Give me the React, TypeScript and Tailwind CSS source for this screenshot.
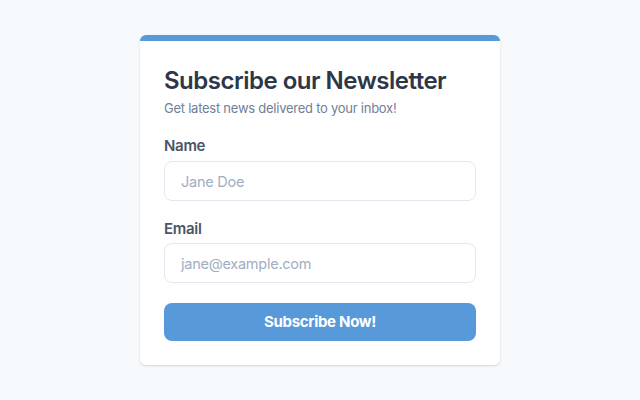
export default function App() {
  return (
    <div className="flex h-[400px] w-[640px] items-center justify-center bg-[#f7fafc]" style={{ fontFamily: "Inter, 'Noto Sans', sans-serif" }}>
      <div className="w-[360px] overflow-hidden rounded-md bg-white shadow-[0_1px_3px_rgba(0,0,0,0.1),0_1px_2px_rgba(0,0,0,0.06)]">
        <div className="h-[6px] bg-[#5899da]" />
        <div className="px-6 pt-6 pb-6">
          <h1 className="text-[24px] leading-[32px] font-semibold tracking-[-0.5px] text-[#2d3748]">Subscribe our Newsletter</h1>
          <p className="mt-[1px] text-[13px] leading-[20px] tracking-[-0.25px] text-[#718096]">Get latest news delivered to your inbox!</p>
          <label className="mt-[16px] block text-[15px] leading-[24px] font-semibold tracking-[-0.3px] text-[#4a5568]">Name</label>
          <input
            className="mt-[3px] block h-[40px] w-full rounded-lg border border-[#e2e8f0] px-4 text-[14.5px] tracking-[-0.25px] text-[#4a5568] placeholder:text-[#a0aec0] outline-none"
            placeholder="Jane Doe"
          />
          <label className="mt-[16px] block text-[15px] leading-[24px] font-semibold tracking-[-0.3px] text-[#4a5568]">Email</label>
          <input
            className="mt-[2px] block h-[40px] w-full rounded-lg border border-[#e2e8f0] px-4 text-[14.5px] tracking-[-0.25px] text-[#4a5568] placeholder:text-[#a0aec0] outline-none"
            placeholder="jane@example.com"
          />
          <button className="mt-[20px] block h-[38px] w-full rounded-lg bg-[#5899da] text-[15px] font-bold tracking-[-0.3px] text-white">
            Subscribe Now!
          </button>
        </div>
      </div>
    </div>
  );
}
